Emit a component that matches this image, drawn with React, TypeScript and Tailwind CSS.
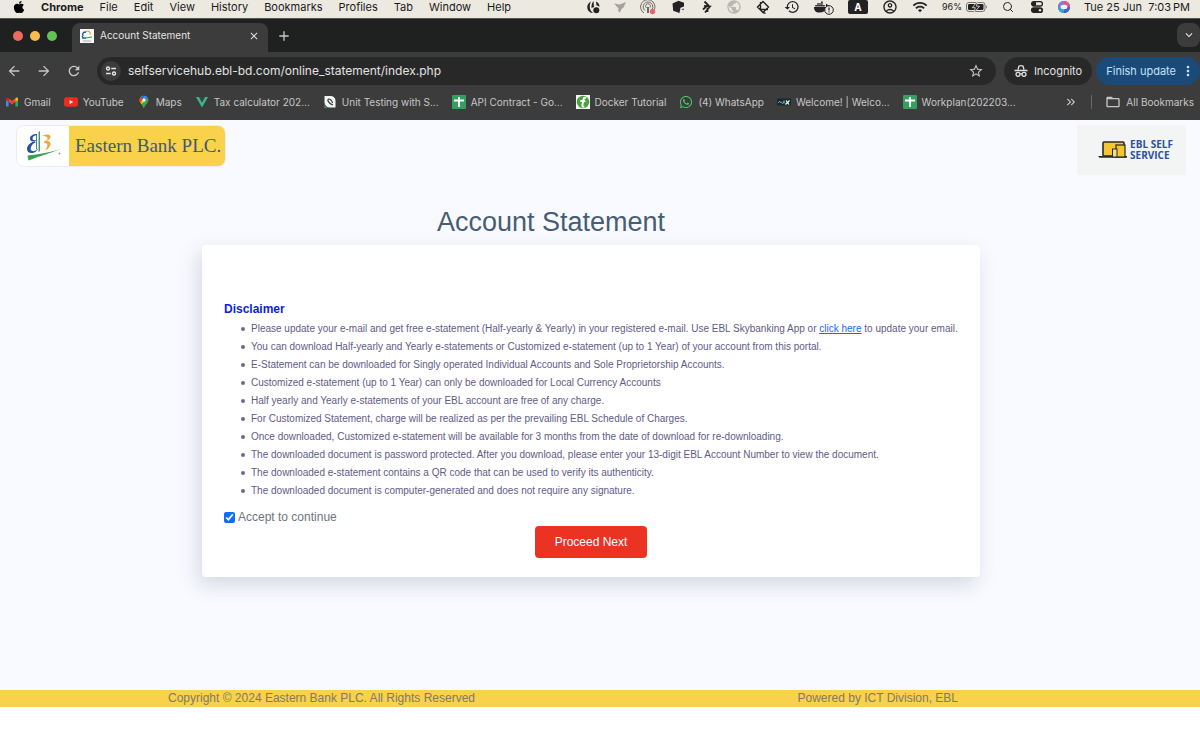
import { useState } from "react";
import type { ReactNode } from "react";
import { FaApple, FaDocker, FaWhatsapp } from "react-icons/fa";
import {
  MdArrowBack,
  MdArrowForward,
  MdRefresh,
  MdStarBorder,
  MdMoreVert,
  MdKeyboardArrowDown,
  MdHistory,
  MdWifi,
  MdPublic,
  MdClose,
  MdAdd,
  MdFolderOpen,
  MdOutlineAccountCircle,
  MdKeyboardDoubleArrowRight,
} from "react-icons/md";
import { Search } from "lucide-react";

const menus = ["File", "Edit", "View", "History", "Bookmarks", "Profiles", "Tab", "Window", "Help"];

const disclaimers: ReactNode[] = [
  <>
    Please update your e-mail and get free e-statement (Half-yearly &amp; Yearly) in your registered e-mail. Use EBL
    Skybanking App or{" "}
    <a href="#update" className="text-[#0d6efd] underline">
      click here
    </a>{" "}
    to update your email.
  </>,
  "You can download Half-yearly and Yearly e-statements or Customized e-statement (up to 1 Year) of your account from this portal.",
  "E-Statement can be downloaded for Singly operated Individual Accounts and Sole Proprietorship Accounts.",
  "Customized e-statement (up to 1 Year) can only be downloaded for Local Currency Accounts",
  "Half yearly and Yearly e-statements of your EBL account are free of any charge.",
  "For Customized Statement, charge will be realized as per the prevailing EBL Schedule of Charges.",
  "Once downloaded, Customized e-statement will be available for 3 months from the date of download for re-downloading.",
  "The downloaded document is password protected. After you download, please enter your 13-digit EBL Account Number to view the document.",
  "The downloaded e-statement contains a QR code that can be used to verify its authenticity.",
  "The downloaded document is computer-generated and does not require any signature.",
];

function SheetsIcon() {
  return (
    <svg viewBox="0 0 14 14" className="size-3.5">
      <rect width="14" height="14" rx="1" fill="#34a060" />
      <path d="M7 2v10M2 5.5h10" stroke="#fff" strokeWidth="1.8" />
    </svg>
  );
}

const bookmarks: { label: string; icon: ReactNode }[] = [
  {
    label: "Gmail",
    icon: (
      <svg viewBox="0 0 14 14" className="size-3.5">
        <path d="M1 4v7.5h2.6V5.6z" fill="#4285f4" />
        <path d="M13 4v7.5h-2.6V5.6z" fill="#34a853" />
        <path d="M3.6 3.2 7 5.8l3.4-2.6v3.6L7 9.4 3.6 6.8z" fill="#ea4335" />
        <path d="M1 4c0-1.6 1.5-1.8 2.6-.8v3.6L1 4.9z" fill="#c5221f" />
        <path d="M13 4c0-1.6-1.5-1.8-2.6-.8v3.6L13 4.9z" fill="#fbbc04" />
      </svg>
    ),
  },
  {
    label: "YouTube",
    icon: (
      <svg viewBox="0 0 14 14" className="size-3.5">
        <rect y="2.3" width="14" height="9.4" rx="2.4" fill="#f1291f" />
        <path d="m5.7 5 3.5 2-3.5 2z" fill="#fff" />
      </svg>
    ),
  },
  {
    label: "Maps",
    icon: (
      <svg viewBox="0 0 14 14" className="size-3.5">
        <path d="M7 .8a4.4 4.4 0 0 0-4.4 4.4c0 3 3.3 4 4.4 8z" fill="#fbbc04" />
        <path d="M11.4 5.2c0 3-3.3 4-4.4 8-.5-1.8-1.5-3-2.4-4L10.6 2.6c.5.7.8 1.6.8 2.6z" fill="#34a853" />
        <path d="M3.6 2.4A4.4 4.4 0 0 1 7 .8L8.2 1 5 5z" fill="#1a73e8" />
        <path d="M2.6 5.2c0-1 .4-2 1-2.8L6 4.4 3.2 7.6c-.4-.7-.6-1.5-.6-2.4z" fill="#ea4335" />
        <path d="M7 .8c1.5 0 2.8.7 3.6 1.8L7 6.6z" fill="#4285f4" />
        <circle cx="7" cy="5.1" r="1.6" fill="#fff" />
      </svg>
    ),
  },
  {
    label: "Tax calculator 202...",
    icon: (
      <svg viewBox="0 0 14 14" className="size-3.5">
        <path d="M1 2h3l3 5.4L10 2h3L7 12.5z" fill="#41b883" />
        <path d="M4 2h1.8L7 4.2 8.2 2H10L7 7.4z" fill="#35495e" />
      </svg>
    ),
  },
  {
    label: "Unit Testing with S...",
    icon: (
      <svg viewBox="0 0 14 14" className="size-3.5">
        <path d="M1.5 1H7c3.500 0 5.500 2 5.500 5v6.500H7.500c-3.500 0-6-2-6-5.500z" fill="#f2f4f3" />
        <path d="M4.500 4.500c1 3 2.500 4.500 5.500 5.500M5 4c2.500 0 4 1.500 4.500 4" stroke="#3c3c3c" strokeWidth="1.200" fill="none" />
        <path d="M1.500 8.500c.3 2.500 1.500 4 4 4.500h-4z" fill="#3f9a6d" />
      </svg>
    ),
  },
  { label: "API Contract - Go...", icon: <SheetsIcon /> },
  {
    label: "Docker Tutorial",
    icon: (
      <svg viewBox="0 0 14 14" className="size-3.5">
        <rect width="14" height="14" fill="#f4f8f0" />
        <circle cx="7" cy="7" r="6.2" fill="#4ba23f" />
        <path
          d="M10 3.200C8.500 2.200 7.800 3 7.500 4.500L6.300 10.500c-.2 1.200.7 1.500 2 .8M4.300 6h5"
          stroke="#fff"
          strokeWidth="1.9"
          fill="none"
        />
      </svg>
    ),
  },
  { label: "(4) WhatsApp", icon: <FaWhatsapp className="size-3.5 text-[#4cc764]" /> },
  {
    label: "Welcome! | Welco...",
    icon: (
      <svg viewBox="0 0 14 14" className="size-3.5">
        <rect y="3.5" width="14" height="7" fill="#17292c" />
        <path d="M1.500 8c0-2 2.200-2 2.200 0M4.500 6.800c0 2 2.400 2 2.400 0M7 5.500v3" stroke="#7fc4bd" fill="none" />
        <path d="m9 5.500 3 4M12.500 5.500l-4 4" stroke="#fff" strokeWidth="1.2" />
      </svg>
    ),
  },
  { label: "Workplan(202203...", icon: <SheetsIcon /> },
];

function StatusIcons() {
  return (
    <div className="flex items-center gap-3.5 text-[#222]">
      <svg viewBox="0 0 14 14" className="h-3.5 w-3.5">
        <path d="M5 1.500C.5 3.500 0 9.500 4 12.200c1 .6 2 .8 3 .6C3.500 10.500 2.800 5.500 5 1.500z" fill="currentColor" />
        <path d="M7.500 1 8 7 5.500 8C5.300 5 6 3 7.500 1zM10 1.500c2.500 1 3.600 3 3.500 5.500-1-1-1.800-1.500-3-1.500z" fill="currentColor" />
        <circle cx="10.3" cy="10.3" r="3" fill="currentColor" />
      </svg>
      <svg viewBox="0 0 12 14" className="h-3.5 w-3">
        <path d="m0 3.500 5.500 1L12 2 9.500 7.500 7.500 9l-1.500 3.500L4 11l.5-2.500z" fill="#ab9f9d" />
      </svg>
      <svg viewBox="0 0 16 16" className="size-4" fill="none" stroke="#6e6b68">
        <path d="M4 14A7.200 7.200 0 1 1 14.500 10.500" />
        <path d="M5 11.500a4.800 4.800 0 1 1 7-1" />
        <path d="M6.500 9a2.400 2.400 0 1 1 3.500-.5" />
        <path d="M8 8v6" strokeWidth="2" />
        <circle cx="12.5" cy="12.5" r="2.7" fill="#e0686a" stroke="none" />
      </svg>
      <svg viewBox="0 0 16 14" className="h-3.5 w-4">
        <path d="m2.500 3.500 6-2.700L14 2.800v3.700l-3.500 1.200-1 5.300L3.200 10.800z" fill="currentColor" />
        <path d="m11.500 9.300 2.200-.8v1.800z" fill="currentColor" />
      </svg>
      <svg viewBox="0 0 12 14" className="h-3.5 w-3" fill="none" stroke="currentColor" strokeWidth="1.8">
        <path d="M4.500 1.500 8 5 3 9.500M4 5.800l6 .7-5 6M7.500 8v4" />
      </svg>
      <MdPublic className="size-4 text-[#b9b6b0]" />
      <svg viewBox="0 0 14 14" className="h-3.5 w-3.5" fill="none" stroke="currentColor" strokeWidth="1.4">
        <path d="m7 1.500 5.500 5.500L7 12.500 1.500 7zM4.500 2v7.500H12M7 12l2.500 1.500" />
      </svg>
      <MdHistory className="size-4" />
      <div className="relative w-5">
        <FaDocker className="size-4" />
        <svg viewBox="0 0 10 10" className="absolute right-0 bottom-0 size-2.5">
          <circle cx="5" cy="5" r="4.3" fill="#ece9e1" stroke="currentColor" />
          <path d="M5 2.500v3M5 6.500v1" stroke="currentColor" strokeWidth="1.2" />
        </svg>
      </div>
      <span className="flex h-3.5 w-5 items-center justify-center rounded-xs bg-[#222] text-[10px] font-bold text-white">
        A
      </span>
      <MdOutlineAccountCircle className="size-4" />
      <MdWifi className="size-4" />
    </div>
  );
}

function MenuBar() {
  return (
    <div className="flex h-[18px] items-center bg-[#ece9e1] pr-2.5 pb-1 text-[11px] leading-3.5 text-[#1a1a1a]">
      <FaApple className="ml-3 size-3.5 text-black" />
      <nav className="ml-[15px] flex gap-4">
        <button className="font-bold">Chrome</button>
        {menus.map((m) => (
          <button key={m}>{m}</button>
        ))}
      </nav>
      <div className="ml-auto flex items-center">
        <StatusIcons />
        <span className="ml-3.5 w-6 text-[9px]">96%</span>
        <svg viewBox="0 0 22 12" className="h-3 w-[22px]">
          <rect x=".5" y="1.5" width="18.5" height="9" rx="2.5" fill="none" stroke="#77756f" />
          <rect x="2" y="3" width="15.5" height="6" rx="1.2" fill="#222" />
          <path d="M20.200 4.500v3c1.200-.5 1.200-2.500 0-3z" fill="#77756f" />
          <path d="M11.500.3 6.300 6.700h3L8 11.700l5.500-6.500h-3z" fill="#222" stroke="#ece9e1" strokeWidth=".8" />
        </svg>
        <Search className="ml-3.5 size-3 text-[#222]" />
        <svg viewBox="0 0 14 14" className="ml-4 size-3.5" fill="none" stroke="#222" strokeWidth="1.3">
          <rect x="1.6" y="1.6" width="10.8" height="4.4" rx="2.2" />
          <rect x="1.6" y="8" width="10.8" height="4.4" rx="2.2" fill="#222" />
          <circle cx="4" cy="3.8" r="1.6" fill="#222" />
          <circle cx="10" cy="10.2" r="1.2" fill="#ece9e1" stroke="none" />
        </svg>
        <svg viewBox="0 0 12 12" className="ml-3.5 size-3">
          <circle cx="6" cy="6" r="6" fill="#3a3f6b" />
          <path d="M6 0a6 6 0 0 1 6 6L6 6z" fill="#e2568c" />
          <path d="M0 6a6 6 0 0 1 6-6v6z" fill="#8b7bd8" />
          <path d="M0 6a6 6 0 0 0 6 6V6z" fill="#2fa8cf" />
          <path d="M12 6a6 6 0 0 1-6 6V6z" fill="#4363c8" />
          <ellipse cx="6" cy="6" rx="3.4" ry="2.2" fill="#f1f4ff" />
        </svg>
        <span className="ml-3.5 whitespace-pre">{"Tue 25 Jun  7:03\u2009PM"}</span>
      </div>
    </div>
  );
}

function TabStrip() {
  return (
    <div className="flex h-[34px] items-end border-t border-[#56564f] bg-[#1f2120]">
      <div className="flex h-full items-center gap-[7px] pl-[13px]">
        <span className="size-2.5 rounded-full bg-[#ee6a5f]" />
        <span className="size-2.5 rounded-full bg-[#f5bd4f]" />
        <span className="size-2.5 rounded-full bg-[#61c454]" />
      </div>
      <div className="ml-[15px] flex h-[29px] w-[196px] items-center rounded-t-lg bg-[#3c3c3c] pr-2 pb-1 pl-2">
        <svg viewBox="0 0 14 14" className="size-3.5">
          <rect width="14" height="14" fill="#f6f8f7" />
          <path d="M6 3C3 3 2 5 3 6.500 1.500 8 3 9.500 6 9" fill="none" stroke="#2553a0" strokeWidth="1.3" />
          <path d="M6 2.500c3-1 5 .5 4 3" fill="none" stroke="#eaa63a" strokeWidth="1.2" />
          <path d="M2 9.500 12 8" stroke="#3a9c4d" strokeWidth="1.2" />
          <path d="M3 12h8" stroke="#aab" />
        </svg>
        <span className="ml-1.5 flex-1 text-[10px] text-[#e3e3e3]">Account Statement</span>
        <button aria-label="Close tab" className="text-[#e3e3e3]">
          <MdClose className="size-3" />
        </button>
      </div>
      <button aria-label="New tab" className="mb-2 ml-2 text-[#c7c7c7]">
        <MdAdd className="size-4" />
      </button>
      <button
        aria-label="Search tabs"
        className="mb-[5px] ml-auto flex h-6 w-[23px] items-center justify-center rounded-lg bg-[#3c3c3c] text-[#e3e3e3]"
      >
        <MdKeyboardArrowDown className="size-3.5" />
      </button>
    </div>
  );
}

function Toolbar() {
  return (
    <div className="flex h-[38px] items-center bg-[#3c3c3c] pl-1.5 text-[#c7c7c7]">
      <button aria-label="Back">
        <MdArrowBack className="size-4" />
      </button>
      <button aria-label="Forward" className="ml-3.5">
        <MdArrowForward className="size-4" />
      </button>
      <button aria-label="Reload" className="ml-3.5">
        <MdRefresh className="size-4" />
      </button>
      <div className="ml-[15px] flex h-7 flex-1 items-center rounded-full bg-[#282828] pr-3 pl-1">
        <span className="flex size-5 items-center justify-center rounded-full bg-[#3c3c3c]">
          <svg viewBox="0 0 12 12" className="size-3" fill="none" stroke="#e3e3e3" strokeWidth="1.4">
            <circle cx="3" cy="3.5" r="1.5" />
            <path d="M6.200 3.500H11M1 8.500h4.800" />
            <circle cx="9" cy="8.5" r="1.5" />
          </svg>
        </span>
        <input
          aria-label="Address"
          defaultValue="selfservicehub.ebl-bd.com/online_statement/index.php"
          className="ml-[7px] min-w-0 flex-1 bg-transparent text-[12px] text-[#e3e3e3] outline-none"
        />
        <button aria-label="Bookmark this page">
          <MdStarBorder className="size-4" />
        </button>
      </div>
      <div className="ml-2 flex h-7 items-center gap-1.5 rounded-full bg-[#282828] px-2.5 text-[11px] text-[#e3e3e3]">
        <svg viewBox="0 0 14 14" className="size-3.5" fill="none" stroke="#e3e3e3" strokeWidth="1.3">
          <path d="M4 5.500 5 2c1.300-.5 2.700-.5 4 0l1 3.500M.5 6.500h13" />
          <circle cx="4" cy="10.3" r="2" />
          <circle cx="10" cy="10.3" r="2" />
          <path d="M6 10c.6-.5 1.400-.5 2 0" />
        </svg>
        Incognito
      </div>
      <button className="ml-1 flex h-7 items-center rounded-full bg-[#1b4a78] pr-1 pl-2.5 text-[11px] text-[#c2e2ff]">
        Finish update
        <MdMoreVert className="ml-1 size-4" />
      </button>
    </div>
  );
}

function BookmarksBar() {
  return (
    <div className="flex h-[30px] items-center gap-[13px] bg-[#3c3c3c] pr-1.5 pb-1.5 pl-[5px] text-[10px] whitespace-nowrap text-[#c7c7c7]">
      {bookmarks.map((b) => (
        <a key={b.label} href="#bookmark" className="flex items-center gap-[5px]">
          {b.icon}
          {b.label}
        </a>
      ))}
      <button aria-label="More bookmarks" className="ml-auto">
        <MdKeyboardDoubleArrowRight className="size-3.5" />
      </button>
      <span className="h-3.5 w-px bg-[#6a6a6a]" />
      <a href="#all" className="flex items-center gap-[5px]">
        <MdFolderOpen className="size-4" />
        All Bookmarks
      </a>
    </div>
  );
}

function BankLogo() {
  return (
    <div className="flex h-[42px] overflow-hidden rounded-lg border border-[#ececf2] bg-white">
      <svg viewBox="0 0 52 40" className="h-10 w-[52px]">
        <path d="M20 8c-4 0-7.500 2-7 5 .3 2 2.500 2.800 4.500 2.500 1-.2 1.500-.8 1.500-1.500-2 .5-3.500.2-3.500-1.500 0-2 2-3.200 4.500-3.500z" fill="#2352a3" />
        <path d="M18 15.500c-4 .5-8 3.500-8 7.500 0 3 2.500 4.500 5.500 4 2.500-.5 4.500-2 5.500-4.500-2 2-4 3-5.800 2.500-2-.6-2-3-.6-5.200 1-1.500 2.200-2.600 3.900-3.300z" fill="#2352a3" />
        <path
          d="M25 10c3-2 8-2.500 8.500.5.3 2-2 3.800-4.500 4.500 4-.5 5.500 2 4 5-1 2-3 3.500-5.500 4.500 2.500-2.500 3.500-5 2.500-6.500-.7-1-1.800-1.200-3-1l.5-2c2-.4 3.300-1.500 3-3-.4-1.500-2.500-2-5.500-2z"
          fill="#eba93c"
        />
        <path d="M21.500 6 23 5v20l-1.500 1z" fill="#3e9e57" />
        <path d="M19.500 9v14" stroke="#2352a3" strokeWidth=".8" />
        <path d="M10.500 29.500c12-1 23-3.500 33.500-6.500-11 4-22 7.500-32.500 11.500z" fill="#3aa04c" />
        <circle cx="42.5" cy="27.5" r="1" fill="#9a8fc4" />
      </svg>
      <div className="flex items-center bg-[#f9d14b] pr-1 pl-1.5 font-['Liberation_Serif',serif] text-[19px] text-[#3d5a78]">
        Eastern Bank PLC.
      </div>
    </div>
  );
}

function SelfServiceLogo() {
  return (
    <div className="flex h-[50px] w-[109px] items-center justify-center gap-0.5 bg-[#f3f4f4] pl-2">
      <svg viewBox="0 0 30 20" className="h-5 w-[30px]">
        <rect x="5" y="2" width="21" height="14" rx="1" fill="#f6c62f" stroke="#2a2a2a" strokeWidth="1.6" />
        <path d="M0 16h29v1.800H1.500z" fill="#2a2a2a" />
        <rect x="18" y="5" width="9" height="12" fill="#f6c62f" stroke="#2a2a2a" strokeWidth="1.2" />
        <rect x="14.5" y="9" width="4.5" height="8" fill="#f6dd8b" stroke="#2a2a2a" />
      </svg>
      <div className="font-['Open_Sans',sans-serif] text-[10px] leading-[11px] font-bold text-[#2a52a2]">
        <div>EBL SELF</div>
        <div>SERVICE</div>
      </div>
    </div>
  );
}

function StatementPage() {
  const [accepted, setAccepted] = useState(true);

  return (
    <div className="font-['Liberation_Sans',Arial,sans-serif]">
      <div className="bg-[#f9faff] pb-[113px]">
        <header className="flex items-start justify-between pt-[5px] pr-3.5 pl-4">
          <BankLogo />
          <SelfServiceLogo />
        </header>
        <main className="mx-auto w-[65%] pt-[29px] pr-0.5 text-[#6c757d]">
          <div className="-ml-2 mr-2">
            <h1 className="pr-20 text-center text-[27px] leading-9 text-[#475c75]">Account Statement</h1>
            <section className="mt-[5px] rounded-sm bg-white px-[22px] pt-[55px] pb-[19px] shadow-[-4px_8px_20px_rgba(60,70,100,0.18)]">
              <h2 className="text-[12px] leading-[18px] font-bold text-[#0a1fe0]">Disclaimer</h2>
              <ul className="mt-0.5 pl-[17px] text-[10px] leading-[18px] whitespace-nowrap text-[#5f5b86]">
                {disclaimers.map((text, i) => (
                  <li key={i} className="flex items-center gap-1.5 before:size-1 before:rounded-full before:bg-[#6c6a85]">
                    <span>{text}</span>
                  </li>
                ))}
              </ul>
              <label className="mt-2 flex items-center gap-[3px] text-[12px] leading-[18px]">
                <input
                  type="checkbox"
                  checked={accepted}
                  onChange={(e) => setAccepted(e.target.checked)}
                  className="size-[11px] accent-[#0d6efd]"
                />
                Accept to continue
              </label>
              <button
                disabled={!accepted}
                className="mx-auto block h-8 w-28 rounded-sm bg-[#ea3323] text-[12px] text-white disabled:opacity-60"
              >
                Proceed Next
              </button>
            </section>
          </div>
        </main>
      </div>
      <footer className="grid grid-cols-[61%_39%] bg-[#f9d14b] pl-[14%] text-[12px] leading-[17px] text-[#7f7b66]">
        <span>Copyright © 2024 Eastern Bank PLC. All Rights Reserved</span>
        <span>Powered by ICT Division, EBL</span>
      </footer>
    </div>
  );
}

export default function App() {
  return (
    <div className="min-h-screen bg-white font-['Inter',sans-serif]">
      <MenuBar />
      <TabStrip />
      <Toolbar />
      <BookmarksBar />
      <StatementPage />
    </div>
  );
}
